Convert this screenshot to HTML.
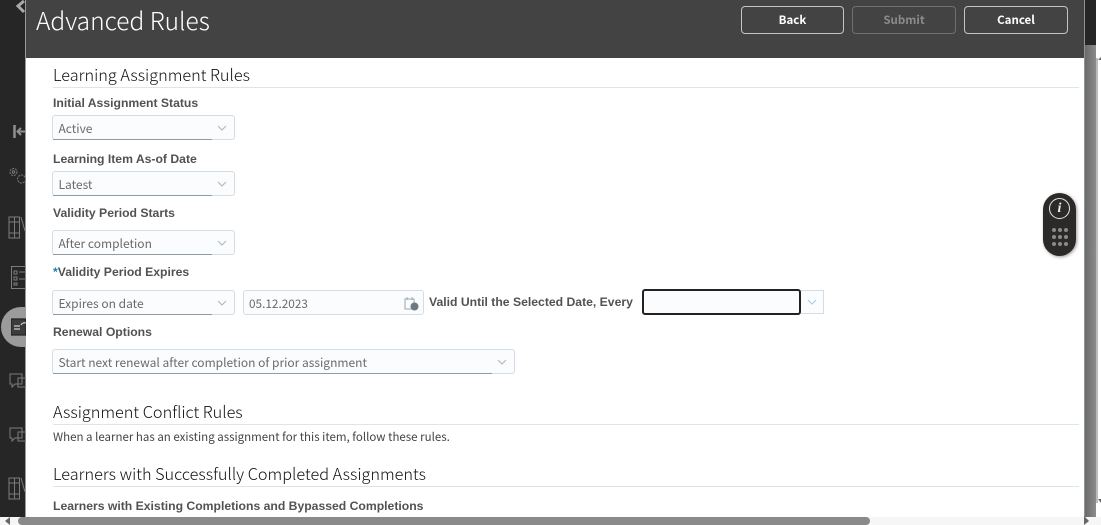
<!DOCTYPE html>
<html><head><meta charset="utf-8">
<style>
html,body{margin:0;padding:0;width:1101px;height:525px;overflow:hidden;background:#fff}
body{position:relative;font-family:"Noto Sans CJK JP","Liberation Sans",sans-serif;color:#333}
.a{position:absolute;white-space:nowrap}
.lbl{font:bold 12.2px/14px "Liberation Sans",sans-serif;color:#525252;left:53px}
.h{left:53px;font-size:16.25px;line-height:22px;font-weight:300;color:#111}
.rule{left:53px;width:1026px;height:1px;background:#dfe4e8}
.sel{position:absolute;box-sizing:border-box;height:25px;border:1px solid #d3dde3;border-radius:3px;background:#fbfcfe;font-size:12px;line-height:25px;color:#6a6a6a;padding-left:5.5px;white-space:nowrap}
.sel i{position:absolute;left:0;bottom:-1px;height:1px;background:#8d9ca5}
.sel svg{position:absolute;top:9px}
.btn{position:absolute;top:6px;height:28px;box-sizing:border-box;border:1px solid #c4c4c4;border-radius:4px;color:#fff;font-size:11.5px;font-weight:700;line-height:26px;text-align:center}
</style></head><body>
<div class="a" style="left:0;top:0;width:26px;height:517px;background:#262626"></div>
<div class="a" style="left:25px;top:0;width:1px;height:517px;background:#9a9a9a"></div>
<div class="a" style="left:26px;top:0;width:1059px;height:58px;background:#434343"></div>
<div class="a" style="left:1085px;top:0;width:11px;height:45px;background:#262626"></div>
<div class="a" style="left:1084px;top:0;width:1px;height:517px;background:#8b939b"></div>
<div class="a" style="left:1085px;top:45px;width:11px;height:472px;background:linear-gradient(90deg,#6a6a6a,#8c8c8c)"></div>
<div class="a" style="left:1096px;top:58px;width:2px;height:445px;background:#bbb"></div>
<svg class="a" style="left:0;top:0" width="26" height="517" fill="none" stroke="#7c7c7c" stroke-width="1">
<path d="M24 1 L18 6 L24 12" stroke="#aaa" stroke-width="3"/>
<path d="M14.500 125v13" stroke="#8f8f8f" stroke-width="2.500"/><path d="M25 131.500h-7M21 128l-3.500 3.500 3.500 3.500" stroke="#8f8f8f" stroke-width="2"/>
<circle cx="13.500" cy="172" r="3.500" stroke-dasharray="2 1"/><circle cx="21.500" cy="179" r="4" stroke-dasharray="2 1"/><circle cx="13.500" cy="172" r="1.200"/>
<path d="M9 217h5.500v21H9zM14.500 217H19.500v21h-5zM9 222h10.500M9 233h10.500M21 217l4 14"/>
<path d="M11.500 266.500h14.500v22H11.500zM14 271h3v3h-3zM14 277h3v3h-3zM14 283h3v2h-3zM19 272h7M19 279h7"/>
<path d="M10 374h12v10h-7l-3 3v-3h-2zM18 378h8v9h-8z"/>
<path d="M10 428h12v10h-7l-3 3v-3h-2zM18 432h8v9h-8z"/>
<path d="M9 478h5.500v21H9zM14.500 478H19.500v21h-5zM9 483h10.500M9 494h10.500M21 478l4 14"/>
</svg>
<div class="a" style="left:1px;top:307px;width:25px;height:40px;background:#9b9b9b;border-radius:20px 0 0 20px"></div>
<svg class="a" style="left:11px;top:318px" width="15" height="18" fill="none" stroke="#222" stroke-width="1.200"><path d="M0 1h15v16H0z" fill="#3c3c3c"/><path d="M3 8h6M3 11h6" stroke="#ccc"/><path d="M10 7a4 4 0 0 1 5-2" stroke="#ccc"/></svg>

<div class="a" style="left:36px;top:4px;font-size:24.5px;line-height:34px;font-weight:300;color:#fff">Advanced Rules</div>
<div class="btn" style="left:741px;width:103px">Back</div>
<div class="btn" style="left:852px;width:104px;border-color:#6f6f6f;color:#8b8b8b">Submit</div>
<div class="btn" style="left:964px;width:104px">Cancel</div>

<div class="a h" style="top:63px">Learning Assignment Rules</div>
<div class="a rule" style="top:87px"></div>
<div class="a lbl" style="top:96px">Initial Assignment Status</div>
<div class="sel" style="left:52px;top:115px;width:183px">Active<i style="width:159px"></i><svg style="left:164px" width="10" height="7" fill="none" stroke="#aab4ba"><path d="M1 1l4 4 4-4"/></svg></div>
<div class="a lbl" style="top:152px">Learning Item As-of Date</div>
<div class="sel" style="left:52px;top:171px;width:183px">Latest<i style="width:159px"></i><svg style="left:164px" width="10" height="7" fill="none" stroke="#aab4ba"><path d="M1 1l4 4 4-4"/></svg></div>
<div class="a lbl" style="top:206px">Validity Period Starts</div>
<div class="sel" style="left:52px;top:230px;width:183px">After completion<i style="width:159px"></i><svg style="left:164px" width="10" height="7" fill="none" stroke="#aab4ba"><path d="M1 1l4 4 4-4"/></svg></div>
<div class="a lbl" style="top:265px"><span style="color:#1a7fb5">*</span>Validity Period Expires</div>
<div class="sel" style="left:52px;top:290px;width:183px">Expires on date<i style="width:159px"></i><svg style="left:164px" width="10" height="7" fill="none" stroke="#aab4ba"><path d="M1 1l4 4 4-4"/></svg></div>
<div class="sel" style="left:243px;top:290px;width:181px;font-size:11.8px;padding-left:5px">05.12.2023<svg style="left:160px;top:5px" width="15" height="15" fill="none" stroke="#9aa"><path d="M1 3h9v10H1zM3 1v3M8 1v3"/><circle cx="10.500" cy="10.500" r="4" fill="#6f7a80" stroke="none"/></svg></div>
<div class="a lbl" style="left:429px;top:295px">Valid Until the Selected Date, Every</div>
<div class="a" style="left:642px;top:289px;width:159px;height:26px;box-sizing:border-box;border:2px solid #222;border-radius:3px;background:#fbfcfe"></div>
<div class="a" style="left:801px;top:290px;width:23px;height:24px;box-sizing:border-box;border:1px solid #d3dde3;border-left:0;background:#fbfcfe"></div>
<svg class="a" style="left:807px;top:299px" width="10" height="7" fill="none" stroke="#a8c8e0"><path d="M1 1l4 4 4-4"/></svg>
<div class="a lbl" style="top:325px">Renewal Options</div>
<div class="sel" style="left:52px;top:349px;width:463px">Start next renewal after completion of prior assignment<i style="width:439px"></i><svg style="left:444px" width="10" height="7" fill="none" stroke="#aab4ba"><path d="M1 1l4 4 4-4"/></svg></div>

<div class="a h" style="top:400px">Assignment Conflict Rules</div>
<div class="a rule" style="top:424px"></div>
<div class="a" style="left:53px;top:428px;font-size:11.500px;line-height:18px;color:#444">When a learner has an existing assignment for this item, follow these rules.</div>
<div class="a h" style="top:462px">Learners with Successfully Completed Assignments</div>
<div class="a rule" style="top:486px"></div>
<div class="a lbl" style="top:499px">Learners with Existing Completions and Bypassed Completions</div>

<div class="a" style="left:0;top:517px;width:1101px;height:8px;background:#f6f6f6"></div>
<div class="a" style="left:18px;top:517px;width:852px;height:8px;background:#8a8a8a;border-radius:4px"></div>
<svg class="a" style="left:0;top:0" width="1101" height="525"><path d="M10 517l-5 4 5 4z" fill="#666"/><path d="M1084 516v9l5-4z" fill="#666"/><path d="M1098 499h3v4z" fill="#666"/><path d="M1098 60l3-3v3z" fill="#666"/></svg>

<div class="a" style="left:1043px;top:193px;width:33px;height:63px;background:#2c2a28;border-radius:17px;box-shadow:1px 1px 3px rgba(0,0,0,.4)"></div>
<div class="a" style="left:1049px;top:198px;width:19px;height:19px;border:1.500px solid #e8e8e8;border-radius:50%;color:#eee;font:italic bold 14px/19px 'Liberation Serif',serif;text-align:center">i</div>
<svg class="a" style="left:1051px;top:227px" width="18" height="20" fill="#8a8a8a"><circle cx="3" cy="3" r="2"/><circle cx="9" cy="3" r="2"/><circle cx="15" cy="3" r="2"/><circle cx="3" cy="10" r="2"/><circle cx="9" cy="10" r="2"/><circle cx="15" cy="10" r="2"/><circle cx="3" cy="17" r="2"/><circle cx="9" cy="17" r="2"/><circle cx="15" cy="17" r="2"/></svg>
</body></html>
